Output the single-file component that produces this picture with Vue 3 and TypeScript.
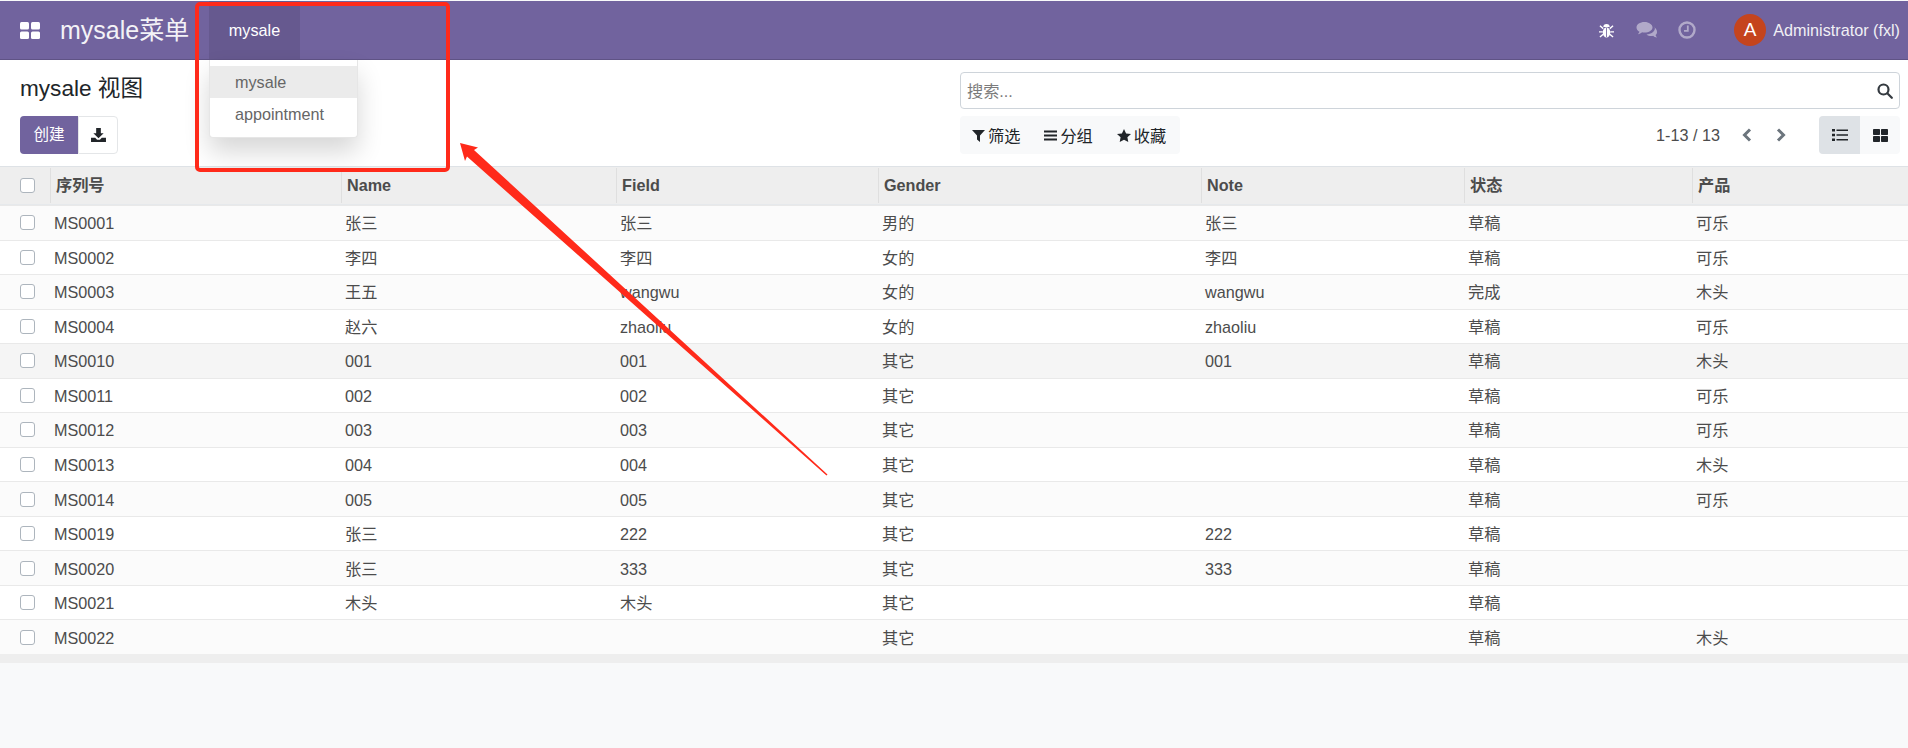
<script setup lang="ts">
interface Row {
  code: string
  name: string
  field: string
  gender: string
  note: string
  state: string
  product: string
}

const rows: Row[] = [
  { code: 'MS0001', name: '张三', field: '张三', gender: '男的', note: '张三', state: '草稿', product: '可乐' },
  { code: 'MS0002', name: '李四', field: '李四', gender: '女的', note: '李四', state: '草稿', product: '可乐' },
  { code: 'MS0003', name: '王五', field: 'wangwu', gender: '女的', note: 'wangwu', state: '完成', product: '木头' },
  { code: 'MS0004', name: '赵六', field: 'zhaoliu', gender: '女的', note: 'zhaoliu', state: '草稿', product: '可乐' },
  { code: 'MS0010', name: '001', field: '001', gender: '其它', note: '001', state: '草稿', product: '木头' },
  { code: 'MS0011', name: '002', field: '002', gender: '其它', note: '', state: '草稿', product: '可乐' },
  { code: 'MS0012', name: '003', field: '003', gender: '其它', note: '', state: '草稿', product: '可乐' },
  { code: 'MS0013', name: '004', field: '004', gender: '其它', note: '', state: '草稿', product: '木头' },
  { code: 'MS0014', name: '005', field: '005', gender: '其它', note: '', state: '草稿', product: '可乐' },
  { code: 'MS0019', name: '张三', field: '222', gender: '其它', note: '222', state: '草稿', product: '' },
  { code: 'MS0020', name: '张三', field: '333', gender: '其它', note: '333', state: '草稿', product: '' },
  { code: 'MS0021', name: '木头', field: '木头', gender: '其它', note: '', state: '草稿', product: '' },
  { code: 'MS0022', name: '', field: '', gender: '其它', note: '', state: '草稿', product: '木头' },
]

const columns = ['序列号', 'Name', 'Field', 'Gender', 'Note', '状态', '产品']
</script>

<template>
  <div class="page">
    <header class="navbar">
      <svg class="apps" viewBox="0 0 20 17" width="20" height="17" fill="#fff">
        <rect x="0" y="0" width="9" height="7.5" rx="1.5" />
        <rect x="11" y="0" width="9" height="7.5" rx="1.5" />
        <rect x="0" y="9.5" width="9" height="7.5" rx="1.5" />
        <rect x="11" y="9.5" width="9" height="7.5" rx="1.5" />
      </svg>
      <span class="brand">mysale菜单</span>
      <span class="nav-item">mysale</span>
      <div class="nav-right">
        <svg class="sys bug" viewBox="0 0 16 16" width="15" height="15" fill="#fff">
          <ellipse cx="8" cy="10" rx="4" ry="5.5" />
          <path d="M4.6 4.2a3.4 3.2 0 0 1 6.8 0z" />
          <path d="M1 3l3.5 3M15 3l-3.5 3M0 9.5h4M16 9.5h-4M1 15l3.5-3M15 15l-3.5-3" stroke="#fff" stroke-width="1.5" />
          <path d="M8 5v10" stroke="#71639e" stroke-width="0.9" />
        </svg>
        <svg class="sys dim chat" viewBox="0 0 22 18" width="22" height="18" fill="#fff">
          <path d="M8.500 1C4 1 .5 3.300 .5 6.400c0 1.800 1.200 3.300 3 4.300-.3 1-.9 1.800-1.600 2.500 1.600-.2 3-.9 4.100-1.900.8.100 1.600.2 2.500.2 4.500 0 8-2.300 8-5.100S13 1 8.500 1z" />
          <path d="M18.500 5.400c.3.600.4 1.200.4 1.800 0 3.300-3.600 5.900-8.400 6.200 1.300 1 3 1.500 4.900 1.500.6 0 1.200-.1 1.800-.2.900.9 2.200 1.600 3.800 1.800-.7-.6-1.200-1.400-1.500-2.400 1-.8 1.500-2 1.500-3.200 0-2-1-3.500-2.500-4.500z" />
        </svg>
        <svg class="sys dim clock" viewBox="0 0 18 18" width="18" height="18" fill="none" stroke="#fff" stroke-width="2.400">
          <circle cx="9" cy="9" r="7.500" />
          <path d="M9.800 4.500v5.300H6" stroke-width="1.800" />
        </svg>
        <span class="avatar">A</span>
        <span class="user">Administrator (fxl)</span>
      </div>
    </header>

    <section class="control-panel">
      <div class="cp-left">
        <h1 class="title">mysale 视图</h1>
        <div class="buttons">
          <button type="button" class="btn-create">创建</button>
          <button type="button" class="btn-export">
            <svg viewBox="0 0 16 15" width="15" height="14" fill="#212529">
              <path d="M5.500 0h5v5.500h3L8 11 2.500 5.500h3z" />
              <path d="M0 10.500h4.500L6.500 12.500h3l2-2H16V15H0z" />
            </svg>
          </button>
        </div>
      </div>
      <div class="cp-right">
        <div class="search">
          <span class="placeholder">搜索...</span>
          <svg viewBox="0 0 16 16" width="16" height="16" fill="none" stroke="#343a40" stroke-width="2.200" stroke-linecap="round">
            <circle cx="6.500" cy="6.500" r="5" />
            <path d="M10.500 10.500l4.300 4.300" />
          </svg>
        </div>
        <div class="tools">
          <div class="filters">
            <span class="filter">
              <svg viewBox="0 0 13 13" width="13" height="13" fill="#212529"><path d="M0 1h13L8 6.500V13L5 10.500v-4z" /></svg>筛选
            </span>
            <span class="filter">
              <svg viewBox="0 0 13 13" width="13" height="13" fill="#212529"><path d="M0 1.500h13v2H0zM0 5.500h13v2H0zM0 9.500h13v2H0z" /></svg>分组
            </span>
            <span class="filter">
              <svg viewBox="0 0 14 13" width="14" height="13" fill="#212529"><path d="M7 0l2.100 4.400 4.900.6-3.600 3.300.9 4.700L7 10.700 2.700 13l.9-4.700L0 5l4.900-.6z" /></svg>收藏
            </span>
          </div>
          <div class="pager">
            <span class="pager-text">1-13 / 13</span>
            <svg viewBox="0 0 10 14" width="10" height="14" fill="none" stroke="#6c757d" stroke-width="3"><path d="M8 1.500L2.500 7 8 12.500" /></svg>
            <svg viewBox="0 0 10 14" width="10" height="14" fill="none" stroke="#6c757d" stroke-width="3"><path d="M2 1.500L7.500 7 2 12.500" /></svg>
          </div>
          <div class="switch">
            <span class="view active">
              <svg viewBox="0 0 16 12" width="16" height="12" fill="#212529">
                <path d="M0 0h3v2.500H0zM0 4.750h3v2.500H0zM0 9.500h3V12H0zM4.500 .4H16v1.700H4.500zM4.500 5.150H16v1.700H4.500zM4.500 9.900H16v1.700H4.500z" />
              </svg>
            </span>
            <span class="view">
              <svg viewBox="0 0 15 13" width="15" height="13" fill="#212529">
                <rect width="7" height="6" rx=".8" />
                <rect x="8" width="7" height="6" rx=".8" />
                <rect y="7" width="7" height="6" rx=".8" />
                <rect x="8" y="7" width="7" height="6" rx=".8" />
              </svg>
            </span>
          </div>
        </div>
      </div>
    </section>

    <div class="list">
      <div class="grid head">
        <div class="cell check"><span class="box"></span></div>
        <div v-for="col in columns" :key="col" class="cell th">{{ col }}</div>
      </div>
      <div
        v-for="(row, i) in rows"
        :key="row.code"
        class="grid row"
        :class="{ odd: i % 2 === 0, hovered: row.code === 'MS0010' }"
      >
        <div class="cell check"><span class="box"></span></div>
        <div class="cell">{{ row.code }}</div>
        <div class="cell">{{ row.name }}</div>
        <div class="cell">{{ row.field }}</div>
        <div class="cell">{{ row.gender }}</div>
        <div class="cell">{{ row.note }}</div>
        <div class="cell">{{ row.state }}</div>
        <div class="cell">{{ row.product }}</div>
      </div>
      <div class="foot"></div>
    </div>

    <div class="dropdown">
      <div class="drop-item active">mysale</div>
      <div class="drop-item">appointment</div>
    </div>

    <div class="red-box"></div>
    <svg class="arrow" width="1908" height="748" viewBox="0 0 1908 748">
      <polygon points="460,143 478,147.500 474,150 827.500,474.500 826.500,475.500 467,156.500 465,161" fill="#ff2a1a" />
    </svg>
  </div>
</template>

<style scoped>
.page {
  position: relative;
  height: 748px;
  overflow: hidden;
  background: #f8f9fa;
  color: #4c4c4c;
  font-family: 'Liberation Sans', 'Noto Sans CJK SC', sans-serif;
  font-size: 16.200px;
  line-height: 20px;
}

.navbar {
  display: flex;
  align-items: center;
  height: 58px;
  margin-top: 1px;
  background: #71639e;
  border-bottom: 1px solid #5f5385;
  color: #fff;
}

.apps {
  margin-left: 20px;
}

.brand {
  flex: none;
  margin: 0 20px;
  width: 129px;
  font-size: 25px;
  line-height: 30px;
  white-space: nowrap;
  opacity: 0.92;
}

.nav-item {
  display: flex;
  align-items: center;
  justify-content: center;
  width: 91px;
  height: 100%;
  background: #66598f;
}

.nav-right {
  display: flex;
  align-items: center;
  margin-left: auto;
  padding-right: 8px;
}

.sys {
  display: block;
}

.dim {
  opacity: 0.45;
}

.chat {
  margin-left: 22px;
}

.clock {
  margin-left: 20px;
}

.avatar {
  display: flex;
  align-items: center;
  justify-content: center;
  width: 32px;
  height: 32px;
  margin-left: 38px;
  border-radius: 50%;
  background: #c5441d;
  font-size: 19px;
}

.user {
  margin-left: 7px;
  white-space: nowrap;
  opacity: 0.9;
}

.control-panel {
  display: flex;
  height: 107px;
  background: #fff;
  border-bottom: 1px solid #dee2e6;
  box-sizing: border-box;
}

.cp-left {
  width: 960px;
  padding-left: 20px;
  box-sizing: border-box;
}

.title {
  margin: 14px 0 0;
  height: 42px;
  color: #212529;
  font-size: 22.600px;
  font-weight: 400;
  line-height: 30px;
}

.buttons {
  display: flex;
}

.btn-create {
  width: 58px;
  height: 38px;
  border: none;
  border-radius: 4px 0 0 4px;
  background: #71639e;
  color: #fff;
  font: inherit;
  font-size: 15.600px;
}

.btn-export {
  display: flex;
  align-items: center;
  justify-content: center;
  width: 40px;
  height: 38px;
  padding: 0;
  border: 1px solid #e4e6e8;
  border-radius: 0 4px 4px 0;
  background: #fff;
}

.cp-right {
  flex: 1;
  padding: 12px 8px 0 0;
}

.search {
  display: flex;
  align-items: center;
  justify-content: space-between;
  height: 37px;
  padding: 0 6px;
  border: 1px solid #ced4da;
  border-radius: 4px;
  box-sizing: border-box;
}

.placeholder {
  padding-top: 1px;
  color: #7b7b7b;
}

.tools {
  display: flex;
  align-items: center;
  margin-top: 7px;
}

.filters {
  display: flex;
  align-items: center;
  width: 220px;
  height: 38px;
  padding: 1px 0 0 12px;
  border-radius: 4px;
  background: #f8f9fa;
  box-sizing: border-box;
  gap: 24px;
  color: #212529;
}

.filter {
  display: flex;
  align-items: center;
  gap: 3px;
  white-space: nowrap;
}

.pager {
  display: flex;
  align-items: center;
  margin-left: auto;
  color: #4c4c4c;
}

.pager-text {
  margin-right: 22px;
}

.pager svg + svg {
  margin-left: 24px;
}

.switch {
  display: flex;
  margin-left: 33px;
  border-radius: 4px;
  overflow: hidden;
}

.view {
  display: flex;
  align-items: center;
  justify-content: center;
  width: 40px;
  height: 38px;
  background: #f8f9fa;
}

.view.active {
  width: 41px;
  background: #dee2e6;
}

.list {
  background: #fff;
}

.grid {
  display: grid;
  grid-template-columns: 50px 291px 275px 262px 323px 263px 228px 216px;
}

.head {
  height: 38px;
  background: #eeeeee;
  font-weight: 700;
  border-bottom: 1px solid #e6e9ec;
  box-sizing: border-box;
}

.row {
  height: 34.540px;
  border-top: 1px solid #e9e9e9;
  box-sizing: border-box;
  background: #fff;
}

.row:first-of-type {
  border-top: none;
}

.row.odd {
  background: #fbfbfb;
}

.row.hovered {
  background: #f5f5f5;
}

.cell {
  display: flex;
  align-items: center;
  padding: 1px 0 0 4px;
  white-space: nowrap;
  box-sizing: border-box;
}

.th {
  padding: 0 0 2px 5px;
  margin: 1px 0;
  border-left: 1px solid #dfdfdf;
}

.check {
  padding: 0 0 0 20px;
}

.box {
  display: block;
  width: 15px;
  height: 15px;
  border: 1px solid #adb5bd;
  border-radius: 3px;
  background: #fff;
  box-sizing: border-box;
}

.foot {
  height: 9px;
  background: #eeeeee;
}

.dropdown {
  position: absolute;
  top: 60px;
  left: 209px;
  width: 149px;
  height: 78px;
  padding-top: 6px;
  border: 1px solid #e6e6e6;
  border-top: none;
  border-radius: 0 0 4px 4px;
  background: #fff;
  box-sizing: border-box;
  box-shadow: 0 14px 26px rgba(0, 0, 0, 0.16);
}

.drop-item {
  display: flex;
  align-items: center;
  height: 32px;
  padding-left: 25px;
  color: #666666;
  box-sizing: border-box;
}

.drop-item.active {
  background: #ebebeb;
}

.red-box {
  position: absolute;
  top: 2px;
  left: 195px;
  width: 255px;
  height: 170px;
  border: 4px solid #ff2a1a;
  border-radius: 5px;
  box-sizing: border-box;
}

.arrow {
  position: absolute;
  top: 0;
  left: 0;
  pointer-events: none;
}
</style>

<style>
body {
  margin: 0;
  background: #f8f9fa;
}
</style>
